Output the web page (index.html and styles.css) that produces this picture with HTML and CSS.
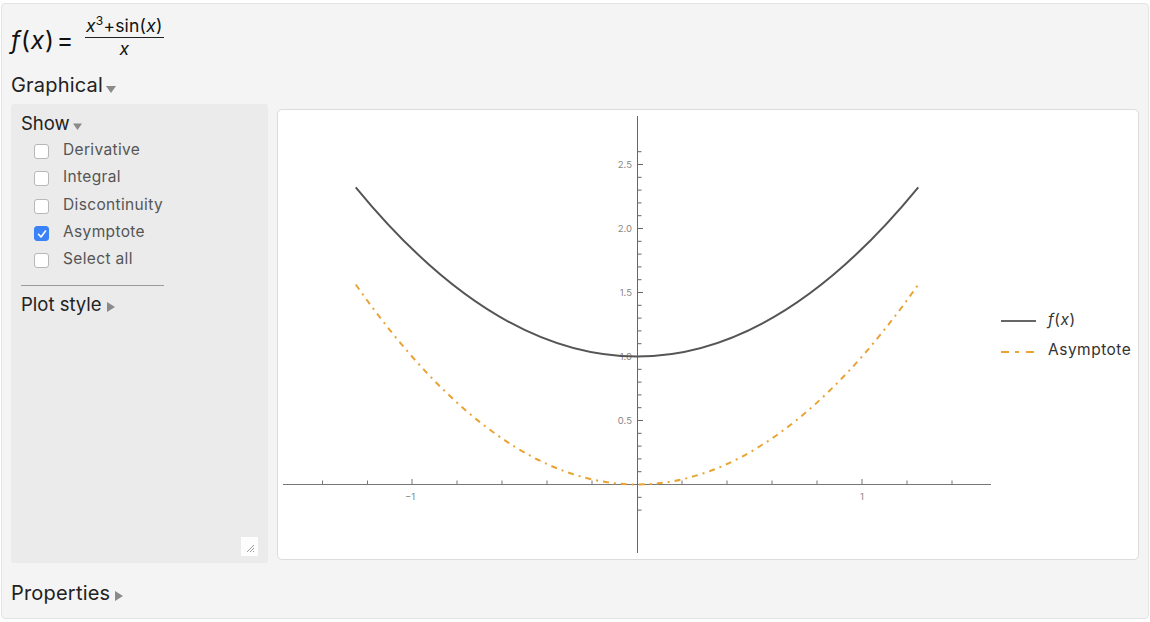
FILE: index.html
```html
<!DOCTYPE html>
<html>
<head>
<meta charset="utf-8">
<link rel="stylesheet" href="styles.css">
</head>
<body>
<div class="app">
  <div class="formula">
    <span class="lhs"><i>f</i>(<i>x</i>)<span class="eq">=</span></span>
    <span class="frac">
      <span class="num"><i>x</i><sup>3</sup>+sin(<i>x</i>)</span>
      <span class="den"><i>x</i></span>
    </span>
  </div>
  <div class="section-title">Graphical<svg class="tri-down" width="10" height="8" viewBox="0 0 10 8"><path d="M0 1 L10 1 L5 8 Z" fill="#8a8a8a"/></svg></div>
  <div class="row">
    <div class="sidebar">
      <div class="side-title">Show<svg class="tri-down sm" width="9" height="7" viewBox="0 0 9 7"><path d="M0 0.5 L9 0.5 L4.5 7 Z" fill="#8a8a8a"/></svg></div>
      <ul class="checks">
        <li><span class="box"></span>Derivative</li>
        <li><span class="box"></span>Integral</li>
        <li><span class="box"></span>Discontinuity</li>
        <li><span class="box on"><svg width="14" height="14" viewBox="0 0 14 14"><path d="M3.5 7.3 L6 10 L10.5 4" fill="none" stroke="#fff" stroke-width="1.6" stroke-linecap="round" stroke-linejoin="round"/></svg></span>Asymptote</li>
        <li><span class="box"></span>Select all</li>
      </ul>
      <div class="sep"></div>
      <div class="side-title">Plot style<svg class="tri-right" width="8" height="10" viewBox="0 0 8 10"><path d="M0 0 L8 5 L0 10 Z" fill="#8a8a8a"/></svg></div>
      <div class="grip"><svg width="17" height="19" viewBox="0 0 17 19"><path d="M6 15 L13 8 M9 15 L13 11 M12 15 L13 14" stroke="#9a9a9a" stroke-width="1"/></svg></div>
    </div>
    <div class="plot">
      <svg class="chart" width="860" height="449" viewBox="278 110 860 449">
        <g stroke="#777" stroke-width="1" fill="none">
          <line x1="283" y1="484.5" x2="991" y2="484.5"/>
          <path d="M322.5 484.5v-4 M367.5 484.5v-4 M412 484.5v-5.5 M457 484.5v-4 M502 484.5v-4 M547 484.5v-4 M592 484.5v-4 M682 484.5v-4 M727 484.5v-4 M772 484.5v-4 M817 484.5v-4 M862 484.5v-5.5 M907 484.5v-4 M952 484.5v-4"/>
        </g>
        <g stroke="#666" stroke-width="1" fill="none">
          <line x1="637.5" y1="116" x2="637.5" y2="553"/>
          <path d="M637.5 510.1h4 M637.5 497.3h4 M637.5 471.7h4 M637.5 458.9h4 M637.5 446.1h4 M637.5 433.3h4 M637.5 420.5h5.5 M637.5 407.7h4 M637.5 394.9h4 M637.5 382.1h4 M637.5 369.3h4 M637.5 356.5h5.5 M637.5 343.7h4 M637.5 330.9h4 M637.5 318.1h4 M637.5 305.3h4 M637.5 292.5h5.5 M637.5 279.7h4 M637.5 266.9h4 M637.5 254.1h4 M637.5 241.3h4 M637.5 228.5h5.5 M637.5 215.7h4 M637.5 202.9h4 M637.5 190.1h4 M637.5 177.3h4 M637.5 164.5h5.5 M637.5 151.7h4"/>
        </g>
        <g class="ticklabel" text-anchor="end">
          <text x="632" y="168">2.5</text>
          <text x="632" y="232">2.0</text>
          <text x="632" y="296">1.5</text>
          <text x="632" y="360">1.0</text>
          <text x="632" y="424">0.5</text>
        </g>
        <g class="ticklabel" text-anchor="middle">
          <text x="410" y="500">−1</text>
          <text x="862" y="500">1</text>
        </g>
        <path d="M355.75 284.5 Q637 684.5 918.25 284.5" fill="none" stroke="#e9a335" stroke-width="2" stroke-dasharray="6 5 2 5"/>
        <path d="M355.75 187.3 C449.5 301.7 543.25 356.5 637 356.5 C730.75 356.5 824.5 301.7 918.25 187.3" fill="none" stroke="#555" stroke-width="2"/>
        <line x1="1001" y1="321" x2="1036" y2="321" stroke="#666" stroke-width="2"/>
        <path d="M1001 352 H1009 M1015 352 H1019 M1026 352 H1034" stroke="#e9a335" stroke-width="2"/>
        <text class="legend" x="1048" y="325"><tspan font-style="italic">f</tspan>(<tspan font-style="italic">x</tspan>)</text>
        <text class="legend" x="1048" y="355">Asymptote</text>
      </svg>
    </div>
  </div>
  <div class="properties">Properties<svg class="tri-right" width="8" height="10" viewBox="0 0 8 10"><path d="M0 0 L8 5 L0 10 Z" fill="#8a8a8a"/></svg></div>
</div>
</body>
</html>
```
FILE: styles.css
```css
html, body {
  margin: 0;
  padding: 0;
  background: #ffffff;
}
body {
  font-family: Inter, "Liberation Sans", sans-serif;
  color: #222;
}
.app {
  box-sizing: border-box;
  margin: 3px 1px 0 1px;
  height: 616px;
  background: #f4f4f4;
  border: 1px solid #e4e4e4;
  border-radius: 4px;
  padding: 8px 9px 0 9px;
  display: flex;
  flex-direction: column;
}
.formula {
  height: 54px;
  display: flex;
  align-items: center;
  gap: 11px;
  color: #111;
}
.lhs {
  font-size: 24.5px;
  letter-spacing: 0.8px;
  margin-top: 1px;
}
.eq {
  margin-left: 2px;
  font-size: 25px;
}
.frac {
  display: inline-flex;
  flex-direction: column;
  align-items: center;
  font-size: 17.5px;
  margin-top: -3px;
}
.num {
  padding: 0 1px 1px 1px;
  border-bottom: 1.5px solid #222;
  line-height: 20px;
  letter-spacing: 0.2px;
}
.num sup {
  font-size: 12px;
  vertical-align: 7px;
  line-height: 0;
}
.den {
  line-height: 22px;
}
.section-title {
  height: 38px;
  display: flex;
  align-items: center;
  font-size: 20px;
  letter-spacing: 0.2px;
  color: #222;
}
.tri-down {
  margin-left: 3px;
  margin-top: 8px;
}
.tri-down.sm {
  margin-top: 7px;
}
.tri-right {
  margin-left: 5px;
  margin-top: 6px;
}
.row {
  display: flex;
  align-items: flex-start;
  gap: 9px;
  height: 459px;
}
.sidebar {
  position: relative;
  box-sizing: border-box;
  width: 257px;
  height: 459px;
  background: #ebebeb;
  border-radius: 3px;
  padding: 8px 10px 0 10px;
}
.side-title {
  display: flex;
  align-items: center;
  height: 22px;
  font-size: 18.5px;
  color: #222;
}
.checks {
  list-style: none;
  margin: 2px 0 0 0;
  padding: 0 0 0 13px;
}
.checks li {
  display: flex;
  align-items: center;
  height: 27.3px;
  font-size: 15.5px;
  color: #555;
  letter-spacing: 0.35px;
}
.box {
  box-sizing: border-box;
  width: 15px;
  height: 15px;
  background: #fff;
  border: 1px solid #b8b8b8;
  border-radius: 3px;
  margin-right: 14px;
  margin-top: 4px;
  display: flex;
}
.box.on {
  background: #3b82f7;
  border-color: #3b82f7;
}
.box.on svg {
  margin: -0.5px;
}
.sep {
  width: 143px;
  height: 1px;
  background: #9a9a9a;
  margin: 13px 0 7px 0;
}
.grip {
  position: absolute;
  right: 10px;
  bottom: 7px;
  width: 17px;
  height: 19px;
  background: #fdfdfd;
}
.grip svg {
  display: block;
}
.plot {
  box-sizing: border-box;
  margin-top: 5px;
  width: 862px;
  height: 451px;
  background: #fff;
  border: 1px solid #dcdcdc;
  border-radius: 5px;
  overflow: hidden;
}
.chart {
  display: block;
}
.ticklabel text {
  font-family: Inter, "Liberation Sans", sans-serif;
  font-size: 9.5px;
  fill: #888;
}
.legend {
  font-family: Inter, "Liberation Sans", sans-serif;
  font-size: 15.5px;
  letter-spacing: 0.5px;
  fill: #333;
}
.properties {
  display: flex;
  align-items: center;
  height: 32px;
  margin-top: 14px;
  font-size: 20px;
  letter-spacing: 0.2px;
  color: #222;
}
```
